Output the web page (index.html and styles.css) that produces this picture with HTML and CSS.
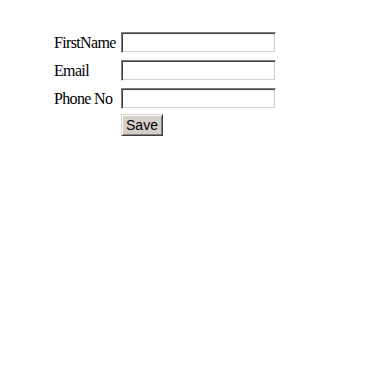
FILE: index.html
```html
<!DOCTYPE html>
<html>
<head>
<meta charset="utf-8">
<link rel="stylesheet" href="styles.css">
</head>
<body>
<form class="form">
  <label class="label" for="fn">FirstName</label>
  <input class="field" id="fn" type="text">
  <label class="label" for="em">Email</label>
  <input class="field" id="em" type="text">
  <label class="label" for="ph">Phone No</label>
  <input class="field" id="ph" type="text">
  <span></span>
  <div class="actions"><button class="btn" type="button">Save</button></div>
</form>
</body>
</html>
```
FILE: styles.css
```css
html, body {
  margin: 0;
  background: #fff;
}
.form {
  display: grid;
  grid-template-columns: 63px 155px;
  column-gap: 4px;
  row-gap: 7px;
  padding: 32px 0 0 54px;
  align-items: center;
  justify-content: start;
  font-family: "Liberation Serif", "Times New Roman", serif;
  font-size: 16px;
  color: #000;
}
.label {
  line-height: 18px;
  letter-spacing: -0.65px;
  white-space: nowrap;
}
.field {
  box-sizing: border-box;
  width: 155px;
  height: 21px;
  margin: 0;
  padding: 1px 2px;
  background: #fff;
  border-style: solid;
  border-width: 1px;
  border-color: #808080 #fff #fff #808080;
  box-shadow: inset 1px 1px 0 #404040, inset -1px -1px 0 #d4d0c8;
  font-family: "Liberation Sans", Arial, sans-serif;
  font-size: 13px;
  outline: none;
}
.actions {
  margin-top: -2px;
}
.btn {
  box-sizing: border-box;
  width: 42px;
  height: 22px;
  margin: 0;
  padding: 0;
  background: #d4d0c8;
  border-style: solid;
  border-width: 1px;
  border-color: #d4d0c8 #404040 #404040 #d4d0c8;
  box-shadow: inset 1px 1px 0 #fff, inset -1px -1px 0 #808080;
  font-family: "Liberation Sans", Arial, sans-serif;
  font-size: 14px;
  color: #000;
}
```
